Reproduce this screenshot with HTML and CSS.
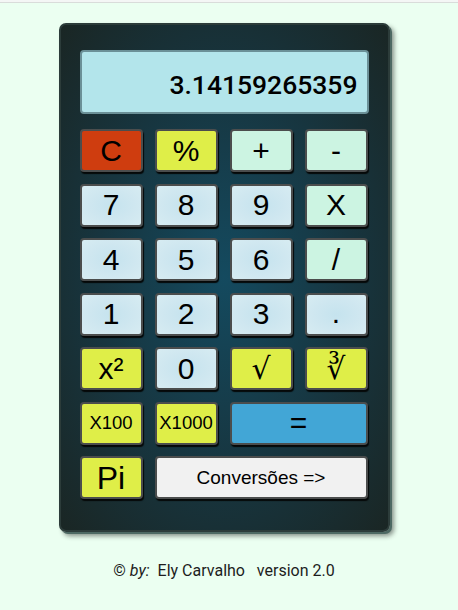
FILE: index.html
```html
<!DOCTYPE html>
<html lang="pt-BR">
<head>
<meta charset="utf-8">
<title>Calculadora</title>
<link rel="stylesheet" href="styles.css">
</head>
<body>
<div class="topline"></div>
<main class="wrap">
  <div class="calc">
    <div class="display">3.14159265359</div>
    <div class="keys">
      <button class="key clear">C</button>
      <button class="key yellow">%</button>
      <button class="key op">+</button>
      <button class="key op">-</button>

      <button class="key num">7</button>
      <button class="key num">8</button>
      <button class="key num">9</button>
      <button class="key op">X</button>

      <button class="key num">4</button>
      <button class="key num">5</button>
      <button class="key num">6</button>
      <button class="key op">/</button>

      <button class="key num">1</button>
      <button class="key num">2</button>
      <button class="key num">3</button>
      <button class="key num dot">.</button>

      <button class="key yellow">x²</button>
      <button class="key num">0</button>
      <button class="key yellow root">√</button>
      <button class="key yellow root">∛</button>

      <button class="key yellow small">X100</button>
      <button class="key yellow small">X1000</button>
      <button class="key equal wide">=</button>

      <button class="key yellow pi">Pi</button>
      <button class="key conv wide3">Conversões =&gt;</button>
    </div>
  </div>
  <p class="footer">© <em>by:</em>&nbsp; Ely Carvalho &nbsp; version 2.0</p>
</main>
</body>
</html>
```
FILE: styles.css
```css
html, body {
  margin: 0;
  padding: 0;
}
body {
  background: #ebfff1;
  font-family: "Liberation Sans", Arial, sans-serif;
  width: 458px;
  height: 610px;
  overflow: hidden;
}
.topline {
  height: 2px;
  border-bottom: 1px solid #d9dcda;
  background: #f4f6f5;
}
.wrap {
  width: 448px;
  display: flex;
  flex-direction: column;
  align-items: center;
  padding-top: 20px;
}
.calc {
  width: 289px;
  padding: 25px 19px 31px 19px;
  border: 2px solid #2c3c3a;
  border-radius: 7px;
  background: radial-gradient(ellipse at 50% 50%, #144a5f 0%, #17353f 55%, #1a2624 100%);
  box-shadow: 2px 2px 0 #4d6963, 4px 4px 5px rgba(0, 0, 0, 0.45);
}
.display {
  height: 60px;
  box-sizing: content-box;
  border: 2px solid #6b9097;
  border-radius: 4px;
  background: #b3e5eb;
  font-family: Roboto, "Liberation Sans", sans-serif;
  font-weight: 500;
  font-size: 26.5px;
  line-height: 66px;
  padding: 0 9px 0 8px;
  margin: 0 0 15px 0;
  text-align: right;
  color: #000;
}
.keys {
  display: grid;
  grid-template-columns: repeat(4, 63px);
  grid-auto-rows: 43px;
  column-gap: 12px;
  row-gap: 11.5px;
  width: 288px;
}
.key {
  margin: 0;
  padding: 0;
  border: 2px solid #4b4d4d;
  border-radius: 4px;
  box-shadow: 1px 2px 1px #050808;
  font-family: "Liberation Sans", Arial, sans-serif;
  font-size: 30px;
  line-height: 1;
  color: #000;
  display: flex;
  align-items: center;
  justify-content: center;
}
.num {
  background: radial-gradient(ellipse at 50% 50%, #c5e3ee 0%, #cfe7f0 55%, #d7ecf2 100%);
}
.op {
  background: #ccf4e2;
}
.clear {
  background: #cf3d0f;
}
.yellow {
  background: #dfee48;
}
.equal {
  background: #42a6d6;
}
.conv {
  background: #f1f1f1;
  font-size: 19px;
}
.wide {
  grid-column: span 2;
}
.wide3 {
  grid-column: span 3;
}
.small {
  font-size: 18.5px;
}
.pi {
  font-size: 32px;
}
.root {
  font-family: "DejaVu Serif", serif;
  font-size: 30px;
}
.dot {
  align-items: flex-end;
  padding-bottom: 6px;
}
.footer {
  margin: 29px 0 0 0;
  font-family: Roboto, "Liberation Sans", sans-serif;
  font-size: 16px;
  color: #1d1d1d;
}
```
